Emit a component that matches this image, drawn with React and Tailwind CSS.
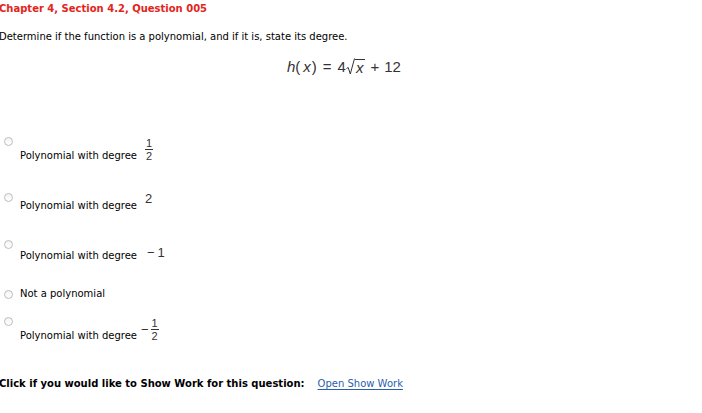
import React from 'react'

function Radio() {
  return (
    <span className="block w-[9px] h-[9px] ml-[4px] shrink-0 rounded-full border border-[#bdbdbd] bg-gradient-to-b from-[#f4f4f4] to-white" />
  )
}

function Frac({ num, den }) {
  return (
    <span className="inline-flex flex-col items-center font-['Liberation_Sans',sans-serif] text-[11px] text-[#333]">
      <span className="leading-[12px]">{num}</span>
      <span className="block w-[8px] h-[1px] bg-[#333]" />
      <span className="leading-[12px]">{den}</span>
    </span>
  )
}

const label = 'Polynomial with degree'

export default function App() {
  return (
    <div className="w-[702px] h-[413px] bg-white overflow-hidden font-['DejaVu_Sans',Verdana,sans-serif] text-[10px] text-black">
      <div className="pt-[3px] -ml-[1px] leading-[12px] font-bold text-[#e3241b]">
        Chapter 4, Section 4.2, Question 005
      </div>
      <div className="mt-[16px] -ml-[1px] leading-[12px]">
        Determine if the function is a polynomial, and if it is, state its degree.
      </div>
      <div className="mt-[15px] pl-[287px] leading-[17px] text-[15px] text-[#333] font-['Liberation_Sans',sans-serif] flex items-end">
        <span className="italic">h</span>
        <span>(</span>
        <span className="italic ml-[3px] mr-[1px]">x</span>
        <span>)</span>
        <span className="mx-[6px]">=</span>
        <span>4</span>
        <span className="inline-flex items-end">
          <svg width="9" height="17" viewBox="0 0 9 17" className="block">
            <path d="M0.5 10.5 L2.2 9.5 L4.3 16 L8.5 0.5" fill="none" stroke="#333" strokeWidth="1" />
          </svg>
          <span className="italic border-t border-[#333] pl-[1px] pr-[2px] leading-[15px]">x</span>
        </span>
        <span className="mx-[5px]">+</span>
        <span>12</span>
      </div>

      <div className="mt-[62px] flex flex-col">
        <div className="flex h-[25px]">
          <Radio />
          <div className="ml-[7px] self-end flex items-end">
            <span className="leading-[12px]">{label}</span>
            <span className="ml-[8px]">
              <Frac num="1" den="2" />
            </span>
          </div>
        </div>

        <div className="flex h-[19px] mt-[31px]">
          <Radio />
          <div className="ml-[7px] self-end flex items-end">
            <span className="leading-[12px]">{label}</span>
            <span className="ml-[8px] mb-[7px] leading-[13px] text-[13px] text-[#333] font-['Liberation_Sans',sans-serif]">2</span>
          </div>
        </div>

        <div className="flex h-[22px] mt-[28px]">
          <Radio />
          <div className="ml-[7px] self-end flex items-end">
            <span className="leading-[12px]">{label}</span>
            <span className="ml-[10px] mb-[3px] leading-[13px] text-[13px] text-[#333] font-['Liberation_Sans',sans-serif]">
              <span className="mr-[3px]">−</span>1
            </span>
          </div>
        </div>

        <div className="flex items-center h-[12px] mt-[26px]">
          <Radio />
          <span className="ml-[7px] leading-[12px]">Not a polynomial</span>
        </div>

        <div className="flex h-[25px] mt-[17px]">
          <Radio />
          <div className="ml-[7px] self-end flex items-end">
            <span className="leading-[12px]">{label}</span>
            <span className="ml-[4px] flex items-center text-[13px] text-[#333] font-['Liberation_Sans',sans-serif]">
              <span className="mr-[2px] leading-[13px]">−</span>
              <Frac num="1" den="2" />
            </span>
          </div>
        </div>
      </div>

      <div className="mt-[36px] -ml-[1px] flex leading-[12px]">
        <span className="font-bold">Click if you would like to Show Work for this question:</span>
        <span className="ml-[13px] text-[#2b5fad] underline underline-offset-2">Open Show Work</span>
      </div>
    </div>
  )
}
